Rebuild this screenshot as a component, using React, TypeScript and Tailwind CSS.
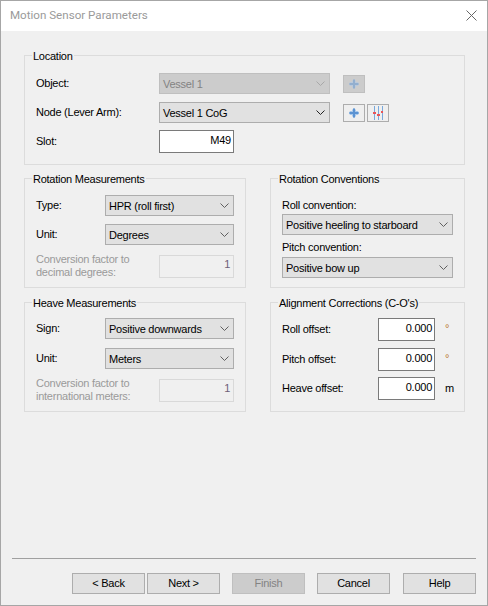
import React from "react";

const font = "font-['Liberation_Sans','Arial',sans-serif]";

function Chevron({ tone = "normal" }: { tone?: "normal" | "disabled" | "focus" }) {
  const stroke = tone === "disabled" ? "#a8a8a8" : tone === "focus" ? "#222222" : "#606060";
  return (
    <svg width="9" height="5" viewBox="0 0 9 5" fill="none" className="shrink-0">
      <path d="M0.5 0.5L4.5 4.5L8.5 0.5" stroke={stroke} strokeWidth="1" />
    </svg>
  );
}

function Select({ value, w, mt, disabled, focus }: { value: string; w: string; mt?: string; disabled?: boolean; focus?: boolean }) {
  return (
    <div
      className={`h-[21px] border flex items-center justify-between pl-[3px] pr-[4px] text-[11px] ${w} ${mt ?? ""} ${
        disabled
          ? "bg-[#cccccc] border-[#bfbfbf] text-[#838383]"
          : "bg-[#e1e1e1] border-[#adadad] text-[#000000]"
      }`}
    >
      <span className="leading-none whitespace-nowrap pt-[1px]">{value}</span>
      <Chevron tone={disabled ? "disabled" : focus ? "focus" : "normal"} />
    </div>
  );
}

function Input({ value, w, disabled }: { value: string; w: string; disabled?: boolean }) {
  return (
    <div
      className={`h-[23px] border flex items-center justify-end pb-[3px] text-[11px] leading-none ${w} ${
        disabled
          ? "pr-[3px] bg-[#f0f0f0] border-[#d9d9d9] text-[#6d6077]"
          : "pr-[2px] bg-white border-[#7a7a7a] text-[#000000]"
      }`}
    >
      {value}
    </div>
  );
}

function Group({ title, className, children }: { title: string; className: string; children: React.ReactNode }) {
  return (
    <div className={`border border-[#dcdcdc] h-[110px] ${className}`}>
      <div className="w-fit -mt-[8px] ml-[7px] px-[1px] bg-[#f0f0f0] text-[11px] leading-[16px] text-black whitespace-nowrap">
        {title}
      </div>
      {children}
    </div>
  );
}

function IconButton({ disabled, children }: { disabled?: boolean; children: React.ReactNode }) {
  return (
    <div
      className={`w-[22px] h-[18px] border flex items-center justify-center ${
        disabled ? "bg-[#cccccc] border-[#bfbfbf]" : "bg-[#efefef] border-[#adadad]"
      }`}
    >
      {children}
    </div>
  );
}

function Move({ disabled }: { disabled?: boolean }) {
  return (
    <svg width="10" height="10" viewBox="0 0 10 10" opacity={disabled ? 0.5 : 1}>
      <path d="M5 0L7 2V3H9L10 5L9 7H7V8L5 10L3 8V7H1L0 5L1 3H3V2Z" fill="#a9c8ea" />
      <rect x="4" y="0.5" width="2" height="9" fill="#5c93d2" />
      <rect x="0.5" y="4" width="9" height="2" fill="#5c93d2" />
    </svg>
  );
}

function Sliders() {
  return (
    <svg width="10" height="14" viewBox="0 0 10 14">
      <rect x="1" y="0" width="1" height="14" fill="#78a8dc" />
      <rect x="5" y="0" width="1" height="14" fill="#78a8dc" />
      <rect x="9" y="0" width="1" height="14" fill="#78a8dc" />
      <rect x="0" y="6" width="3" height="2" fill="#e8555a" />
      <rect x="4" y="8" width="3" height="2" fill="#e8555a" />
      <rect x="8" y="5" width="2" height="2" fill="#e8555a" />
    </svg>
  );
}

function WizardButton({ label, disabled, className }: { label: string; disabled?: boolean; className?: string }) {
  return (
    <div
      className={`w-[73px] h-[21px] border flex items-center justify-center text-[11px] leading-none ${className ?? ""} ${
        disabled ? "bg-[#cccccc] border-[#bfbfbf] text-[#838383]" : "bg-[#e1e1e1] border-[#adadad] text-black"
      }`}
    >
      {label}
    </div>
  );
}

function Row({ label, children, labelW, className }: { label: string; labelW: string; className?: string; children: React.ReactNode }) {
  return (
    <div className={`flex items-center ${className ?? ""}`}>
      <div className={`text-[11px] leading-none text-black pb-[1px] ${labelW}`}>{label}</div>
      {children}
    </div>
  );
}

function Conversion({ lines }: { lines: [string, string] }) {
  return (
    <div className="flex items-center mt-[8px] ml-[11px]">
      <div className="w-[123px] text-[11px] leading-[13px] text-[#9a9a9a] whitespace-nowrap">
        {lines[0]}
        <br />
        {lines[1]}
      </div>
      <Input value="1" w="w-[75px]" disabled />
    </div>
  );
}

function Offset({ label, unit }: { label: string; unit: string }) {
  const isDegree = unit === "°";
  return (
    <div className="flex items-center">
      <div className="w-[96px] text-[11px] leading-none">{label}</div>
      <Input value="0.000" w="w-[57px]" />
      <span className={`ml-[10px] text-[11px] leading-none ${isDegree ? "text-[#b9772c] pb-[3px]" : "text-black"}`}>{unit}</span>
    </div>
  );
}

export default function App() {
  return (
    <div className={`${font} tracking-[-0.25px] w-[488px] h-[606px] bg-[#f0f0f0] border border-[#a6a6a6] flex flex-col overflow-hidden text-black`}>
      <div className="h-[30px] shrink-0 bg-white flex items-center justify-between pl-[9px] pr-[10px]">
        <span className="font-['Roboto',sans-serif] tracking-normal text-[11.6px] leading-none text-[#9a9a9a]">Motion Sensor Parameters</span>
        <svg width="11" height="11" viewBox="0 0 11 11" fill="none" className="-mt-[2px]">
          <path d="M0.5 0.5L10.5 10.5M10.5 0.5L0.5 10.5" stroke="#666666" strokeWidth="1" />
        </svg>
      </div>

      <div className="flex-1 flex flex-col pl-[23px] pt-[24px]">
        <Group title="Location" className="w-[441px]">
          <div className="pl-[11px] pt-[9px] flex flex-col">
            <Row label="Object:" labelW="w-[123px]">
              <Select value="Vessel 1" w="w-[171px]" disabled />
              <div className="ml-[13px]"><IconButton disabled><Move disabled /></IconButton></div>
            </Row>
            <Row label="Node (Lever Arm):" labelW="w-[123px]" className="mt-[8px]">
              <Select value="Vessel 1 CoG" w="w-[171px]" focus />
              <div className="ml-[13px] flex gap-[2px]">
                <IconButton><Move /></IconButton>
                <IconButton><Sliders /></IconButton>
              </div>
            </Row>
            <Row label="Slot:" labelW="w-[123px]" className="mt-[7px]">
              <Input value="M49" w="w-[75px]" />
            </Row>
          </div>
        </Group>

        <div className="flex justify-between w-[441px] mt-[13px]">
          <div className="flex flex-col w-[222px]">
            <Group title="Rotation Measurements" className="">
              <div className="pt-[8px] flex flex-col">
                <Row label="Type:" labelW="w-[69px]" className="ml-[11px]">
                  <Select value="HPR (roll first)" w="w-[129px]" />
                </Row>
                <Row label="Unit:" labelW="w-[69px]" className="ml-[11px] mt-[8px]">
                  <Select value="Degrees" w="w-[129px]" />
                </Row>
                <Conversion lines={["Conversion factor to", "decimal degrees:"]} />
              </div>
            </Group>
            <Group title="Heave Measurements" className="mt-[14px]">
              <div className="pt-[7px] flex flex-col">
                <Row label="Sign:" labelW="w-[69px]" className="ml-[11px]">
                  <Select value="Positive downwards" w="w-[129px]" />
                </Row>
                <Row label="Unit:" labelW="w-[69px]" className="ml-[11px] mt-[9px]">
                  <Select value="Meters" w="w-[129px]" />
                </Row>
                <Conversion lines={["Conversion factor to", "international meters:"]} />
              </div>
            </Group>
          </div>

          <div className="flex flex-col w-[195px]">
            <Group title="Rotation Conventions" className="">
              <div className="pl-[11px] flex flex-col">
                <div className="text-[11px] leading-[16px] mt-[10px]">Roll convention:</div>
                <Select value="Positive heeling to starboard" w="w-[171px]" mt="mt-[1px]" />
                <div className="text-[11px] leading-[16px] mt-[4px]">Pitch convention:</div>
                <Select value="Positive bow up" w="w-[171px]" mt="mt-[2px]" />
              </div>
            </Group>
            <Group title="Alignment Corrections (C-O's)" className="mt-[14px]">
              <div className="pl-[11px] pt-[7px] flex flex-col">
                <Offset label="Roll offset:" unit="°" />
                <div className="mt-[7px]"><Offset label="Pitch offset:" unit="°" /></div>
                <div className="mt-[6px]"><Offset label="Heave offset:" unit="m" /></div>
              </div>
            </Group>
          </div>
        </div>
      </div>

      <div className="shrink-0 mx-[11px] border-t border-[#a0a0a0] h-[47px] flex items-start pt-[14px] pl-[60px]">
        <WizardButton label="< Back" />
        <WizardButton label="Next >" className="ml-[2px]" />
        <WizardButton label="Finish" disabled className="ml-[12px]" />
        <WizardButton label="Cancel" className="ml-[12px]" />
        <WizardButton label="Help" className="ml-[13px]" />
      </div>
    </div>
  );
}
